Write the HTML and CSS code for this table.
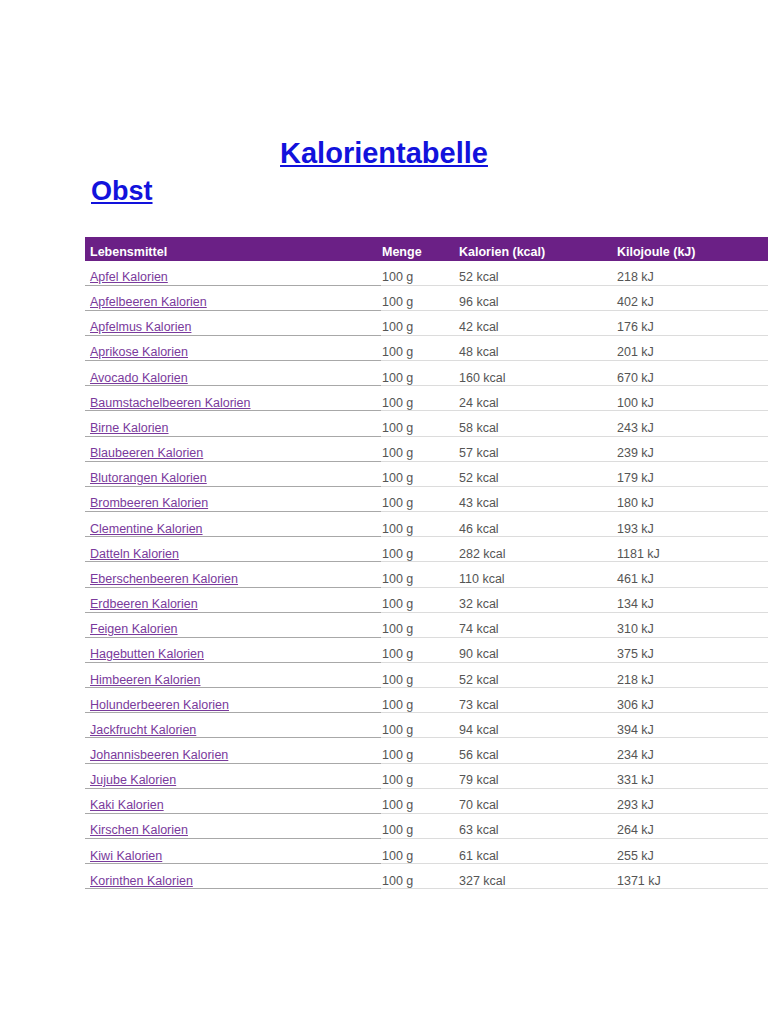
FILE: index.html
```html
<!DOCTYPE html>
<html lang="de">
<head>
<meta charset="utf-8">
<title>Kalorientabelle</title>
<link rel="stylesheet" href="styles.css">
</head>
<body>
<h1 class="title"><a href="#">Kalorientabelle</a></h1>
<h2 class="section"><a href="#">Obst</a></h2>
<div class="table">
  <div class="row head">
    <div class="cell c1">Lebensmittel</div>
    <div class="cell c2">Menge</div>
    <div class="cell c3">Kalorien (kcal)</div>
    <div class="cell c4">Kilojoule (kJ)</div>
  </div>
  <div class="row"><div class="cell c1"><a href="#">Apfel Kalorien</a></div><div class="cell c2">100 g</div><div class="cell c3">52 kcal</div><div class="cell c4">218 kJ</div></div>
  <div class="row"><div class="cell c1"><a href="#">Apfelbeeren Kalorien</a></div><div class="cell c2">100 g</div><div class="cell c3">96 kcal</div><div class="cell c4">402 kJ</div></div>
  <div class="row"><div class="cell c1"><a href="#">Apfelmus Kalorien</a></div><div class="cell c2">100 g</div><div class="cell c3">42 kcal</div><div class="cell c4">176 kJ</div></div>
  <div class="row"><div class="cell c1"><a href="#">Aprikose Kalorien</a></div><div class="cell c2">100 g</div><div class="cell c3">48 kcal</div><div class="cell c4">201 kJ</div></div>
  <div class="row"><div class="cell c1"><a href="#">Avocado Kalorien</a></div><div class="cell c2">100 g</div><div class="cell c3">160 kcal</div><div class="cell c4">670 kJ</div></div>
  <div class="row"><div class="cell c1"><a href="#">Baumstachelbeeren Kalorien</a></div><div class="cell c2">100 g</div><div class="cell c3">24 kcal</div><div class="cell c4">100 kJ</div></div>
  <div class="row"><div class="cell c1"><a href="#">Birne Kalorien</a></div><div class="cell c2">100 g</div><div class="cell c3">58 kcal</div><div class="cell c4">243 kJ</div></div>
  <div class="row"><div class="cell c1"><a href="#">Blaubeeren Kalorien</a></div><div class="cell c2">100 g</div><div class="cell c3">57 kcal</div><div class="cell c4">239 kJ</div></div>
  <div class="row"><div class="cell c1"><a href="#">Blutorangen Kalorien</a></div><div class="cell c2">100 g</div><div class="cell c3">52 kcal</div><div class="cell c4">179 kJ</div></div>
  <div class="row"><div class="cell c1"><a href="#">Brombeeren Kalorien</a></div><div class="cell c2">100 g</div><div class="cell c3">43 kcal</div><div class="cell c4">180 kJ</div></div>
  <div class="row"><div class="cell c1"><a href="#">Clementine Kalorien</a></div><div class="cell c2">100 g</div><div class="cell c3">46 kcal</div><div class="cell c4">193 kJ</div></div>
  <div class="row"><div class="cell c1"><a href="#">Datteln Kalorien</a></div><div class="cell c2">100 g</div><div class="cell c3">282 kcal</div><div class="cell c4">1181 kJ</div></div>
  <div class="row"><div class="cell c1"><a href="#">Eberschenbeeren Kalorien</a></div><div class="cell c2">100 g</div><div class="cell c3">110 kcal</div><div class="cell c4">461 kJ</div></div>
  <div class="row"><div class="cell c1"><a href="#">Erdbeeren Kalorien</a></div><div class="cell c2">100 g</div><div class="cell c3">32 kcal</div><div class="cell c4">134 kJ</div></div>
  <div class="row"><div class="cell c1"><a href="#">Feigen Kalorien</a></div><div class="cell c2">100 g</div><div class="cell c3">74 kcal</div><div class="cell c4">310 kJ</div></div>
  <div class="row"><div class="cell c1"><a href="#">Hagebutten Kalorien</a></div><div class="cell c2">100 g</div><div class="cell c3">90 kcal</div><div class="cell c4">375 kJ</div></div>
  <div class="row"><div class="cell c1"><a href="#">Himbeeren Kalorien</a></div><div class="cell c2">100 g</div><div class="cell c3">52 kcal</div><div class="cell c4">218 kJ</div></div>
  <div class="row"><div class="cell c1"><a href="#">Holunderbeeren Kalorien</a></div><div class="cell c2">100 g</div><div class="cell c3">73 kcal</div><div class="cell c4">306 kJ</div></div>
  <div class="row"><div class="cell c1"><a href="#">Jackfrucht Kalorien</a></div><div class="cell c2">100 g</div><div class="cell c3">94 kcal</div><div class="cell c4">394 kJ</div></div>
  <div class="row"><div class="cell c1"><a href="#">Johannisbeeren Kalorien</a></div><div class="cell c2">100 g</div><div class="cell c3">56 kcal</div><div class="cell c4">234 kJ</div></div>
  <div class="row"><div class="cell c1"><a href="#">Jujube Kalorien</a></div><div class="cell c2">100 g</div><div class="cell c3">79 kcal</div><div class="cell c4">331 kJ</div></div>
  <div class="row"><div class="cell c1"><a href="#">Kaki Kalorien</a></div><div class="cell c2">100 g</div><div class="cell c3">70 kcal</div><div class="cell c4">293 kJ</div></div>
  <div class="row"><div class="cell c1"><a href="#">Kirschen Kalorien</a></div><div class="cell c2">100 g</div><div class="cell c3">63 kcal</div><div class="cell c4">264 kJ</div></div>
  <div class="row"><div class="cell c1"><a href="#">Kiwi Kalorien</a></div><div class="cell c2">100 g</div><div class="cell c3">61 kcal</div><div class="cell c4">255 kJ</div></div>
  <div class="row"><div class="cell c1"><a href="#">Korinthen Kalorien</a></div><div class="cell c2">100 g</div><div class="cell c3">327 kcal</div><div class="cell c4">1371 kJ</div></div>
</div>
</body>
</html>
```

FILE: styles.css
```css
html, body {
  margin: 0;
  padding: 0;
  background: #fff;
  overflow: hidden;
}
body {
  font-family: "Liberation Sans", Arial, sans-serif;
  width: 768px;
}
.title {
  margin: 137px 0 0;
  font-size: 29px;
  line-height: 33px;
  font-weight: bold;
  text-align: center;
}
.title a, .section a {
  color: #1212dc;
  text-decoration: underline;
}
.section {
  margin: 6px 0 0 91px;
  font-size: 27px;
  line-height: 31px;
  font-weight: bold;
}
.table {
  margin: 30px 0 0 85px;
  font-size: 12.5px;
  line-height: 14px;
}
.row {
  display: grid;
  grid-template-columns: 296px 77px 158px 1fr;
}
.cell {
  padding: 9.5px 0 0.67px 1px;
  color: #555;
  border-bottom: 1px solid #dcdcdc;
  white-space: nowrap;
}
.cell.c1 {
  padding-left: 5px;
  border-bottom-color: #a8a8a8;
}
.cell a {
  color: #7a3a9c;
  text-decoration: underline;
}
.head {
  background: #6b2086;
}
.head .cell {
  color: #fff;
  font-weight: bold;
  border-bottom: none;
  padding-top: 8px;
  padding-bottom: 1.5px;
}
```
